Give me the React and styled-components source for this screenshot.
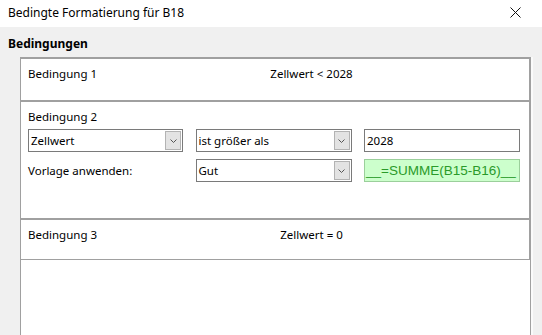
import React from 'react';
import styled, { createGlobalStyle } from 'styled-components';

const GlobalStyle = createGlobalStyle`
  *, *::before, *::after {
    box-sizing: border-box;
  }
  html, body {
    margin: 0;
    padding: 0;
    background: #f0f0f0;
  }
  body {
    font-family: "Noto Sans", "Segoe UI", sans-serif;
    font-size: 11.5px;
    color: #000;
  }
`;

const Window = styled.div`
  width: 542px;
  height: 335px;
  background: #f0f0f0;
  overflow: hidden;
  display: flex;
  flex-direction: column;
`;

const TitleBar = styled.header`
  height: 27px;
  flex-shrink: 0;
  background: #fff;
  display: flex;
  align-items: center;
  justify-content: space-between;
  padding: 0 21px 3px 8px;
  font-size: 12px;
  svg {
    width: 11px;
    height: 11px;
  }
`;

const SectionTitle = styled.h2`
  margin: 0;
  height: 30px;
  flex-shrink: 0;
  display: flex;
  align-items: center;
  padding: 3px 8px 0;
  font-size: 12px;
  font-weight: 700;
`;

const ListBox = styled.div`
  flex: 1;
  margin-left: 20px;
  width: 511px;
  background: #fff;
  border-left: 1px solid #a0a0a0;
  border-right: 1px solid #a0a0a0;
  box-shadow: 2px 0 0 #fafafa;
`;

const ConditionBox = styled.section`
  height: ${p => p.$height}px;
  border-top: 2px solid #a0a0a0;
  border-right: 1px solid #a0a0a0;
  border-bottom: ${p => (p.$last ? '1px solid #a0a0a0' : 'none')};
  margin-left: -1px;
  border-left: 1px solid #a0a0a0;
  padding: 7px 8px 0 7px;
`;

const HeaderRow = styled.div`
  display: grid;
  grid-template-columns: 80px 1fr;
  line-height: 16px;
`;

const Summary = styled.span`
  text-align: center;
  padding-right: 6px;
`;

const FormGrid = styled.div`
  display: grid;
  grid-template-columns: 155px 156px 156px;
  column-gap: 12.5px;
  row-gap: 7px;
  margin-top: 4px;
  align-items: center;
`;

const Combo = styled.div`
  height: 23px;
  border: 1px solid #7a7a7a;
  background: #fff;
  display: flex;
  align-items: stretch;
  span {
    flex: 1;
    padding-left: 2px;
    line-height: 21px;
  }
`;

const DropButton = styled.div`
  width: 16px;
  margin: 1px;
  background: #e3e3e3;
  border: 1px solid #b3b3b3;
  display: flex;
  align-items: center;
  justify-content: center;
  svg {
    width: 7px;
    height: 4px;
  }
`;

const Field = styled.div`
  height: 23px;
  border: 1px solid ${p => (p.$preview ? '#9bcf9b' : '#7a7a7a')};
  background: ${p => (p.$preview ? '#ccffcc' : '#fff')};
  color: ${p => (p.$preview ? '#2a9a2a' : '#000')};
  font-family: ${p => (p.$preview ? '"Liberation Sans", Arial, sans-serif' : 'inherit')};
  font-size: ${p => (p.$preview ? '13.5px' : '11.5px')};
  line-height: 21px;
  padding-left: ${p => (p.$preview ? '1px' : '2px')};
  white-space: nowrap;
  overflow: hidden;
`;

const Label = styled.span`
  line-height: 23px;
`;

function Chevron() {
  return (
    <svg viewBox="0 0 7 4">
      <path d="M0.5 0.5 L3.5 3.5 L6.5 0.5" fill="none" stroke="#555" strokeWidth="1" />
    </svg>
  );
}

function ComboBox({ value }) {
  return (
    <Combo>
      <span>{value}</span>
      <DropButton><Chevron /></DropButton>
    </Combo>
  );
}

export default function App() {
  return (
    <Window>
      <GlobalStyle />
      <TitleBar>
        <span>Bedingte Formatierung für B18</span>
        <svg viewBox="0 0 11 11">
          <path d="M0.5 0.5 L10.5 10.5 M10.5 0.5 L0.5 10.5" stroke="#111" strokeWidth="1" />
        </svg>
      </TitleBar>
      <SectionTitle>Bedingungen</SectionTitle>
      <ListBox>
        <ConditionBox $height={43}>
          <HeaderRow>
            <span>Bedingung 1</span>
            <Summary>Zellwert &lt; 2028</Summary>
          </HeaderRow>
        </ConditionBox>
        <ConditionBox $height={118}>
          <HeaderRow>
            <span>Bedingung 2</span>
          </HeaderRow>
          <FormGrid>
            <ComboBox value="Zellwert" />
            <ComboBox value="ist größer als" />
            <Field>2028</Field>
            <Label>Vorlage anwenden:</Label>
            <ComboBox value="Gut" />
            <Field $preview>__=SUMME(B15-B16)__</Field>
          </FormGrid>
        </ConditionBox>
        <ConditionBox $height={42} $last>
          <HeaderRow>
            <span>Bedingung 3</span>
            <Summary>Zellwert = 0</Summary>
          </HeaderRow>
        </ConditionBox>
      </ListBox>
    </Window>
  );
}
